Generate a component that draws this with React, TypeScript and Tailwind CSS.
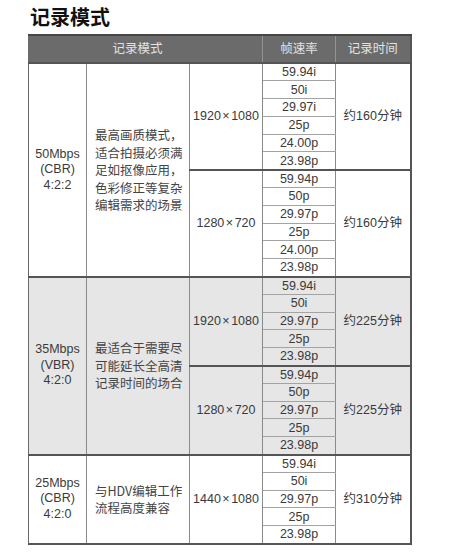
import React from "react";

type Sub = { res: [string, string]; fps: string[]; time: string };
type Section = { rate: string[]; desc: string[]; gray: boolean; subs: Sub[] };

const sections: Section[] = [
  {
    rate: ["50Mbps", "(CBR)", "4:2:2"],
    desc: ["最高画质模式，", "适合拍摄必须满", "足如抠像应用，", "色彩修正等复杂", "编辑需求的场景"],
    gray: false,
    subs: [
      { res: ["1920", "1080"], fps: ["59.94i", "50i", "29.97i", "25p", "24.00p", "23.98p"], time: "约160分钟" },
      { res: ["1280", "720"], fps: ["59.94p", "50p", "29.97p", "25p", "24.00p", "23.98p"], time: "约160分钟" },
    ],
  },
  {
    rate: ["35Mbps", "(VBR)", "4:2:0"],
    desc: ["最适合于需要尽", "可能延长全高清", "记录时间的场合"],
    gray: true,
    subs: [
      { res: ["1920", "1080"], fps: ["59.94i", "50i", "29.97p", "25p", "23.98p"], time: "约225分钟" },
      { res: ["1280", "720"], fps: ["59.94p", "50p", "29.97p", "25p", "23.98p"], time: "约225分钟" },
    ],
  },
  {
    rate: ["25Mbps", "(CBR)", "4:2:0"],
    desc: ["与HDV编辑工作", "流程高度兼容"],
    gray: false,
    subs: [{ res: ["1440", "1080"], fps: ["59.94i", "50i", "29.97p", "25p", "23.98p"], time: "约310分钟" }],
  },
];

export default function App() {
  return (
    <div className="w-[474px] h-[552px] bg-white overflow-hidden font-[family-name:'Liberation_Sans','Noto_Sans_CJK_SC',sans-serif] text-[#3a3a3a]">
      <h1 className="ml-[30px] pt-[5px] text-[20px] leading-[24px] font-bold text-[#111] font-[family-name:'Noto_Sans_CJK_SC',sans-serif]">
        记录模式
      </h1>
      <table className="ml-[28px] mt-[5px] w-[382px] table-fixed border-collapse border-l-[1.5px] border-r-2 border-b-2 border-l-[#6a6a6a] border-r-[#555] border-b-[#555] text-[12.5px]">
        <colgroup>
          <col className="w-[58px]" />
          <col className="w-[103px]" />
          <col className="w-[73px]" />
          <col className="w-[73px]" />
          <col className="w-[75px]" />
        </colgroup>
        <thead>
          <tr className="h-[28px] bg-[#6b6b6b] text-[#e2e2e2]">
            <th colSpan={3} className="font-normal border-t-2 border-t-[#464646] border-b-2 border-b-[#555] pr-[16px] text-center">
              <span className="font-[family-name:'Noto_Sans_CJK_SC',sans-serif]">记录模式</span>
            </th>
            <th className="font-normal border-t-2 border-t-[#464646] border-b-2 border-b-[#555] border-l border-l-[#929292] text-center">
              <span className="font-[family-name:'Noto_Sans_CJK_SC',sans-serif]">帧速率</span>
            </th>
            <th className="font-normal border-t-2 border-t-[#464646] border-b-2 border-b-[#555] border-l border-l-[#929292] text-center">
              <span className="font-[family-name:'Noto_Sans_CJK_SC',sans-serif]">记录时间</span>
            </th>
          </tr>
        </thead>
        {sections.map((sec, si) => {
          const total = sec.subs.reduce((a, s) => a + s.fps.length, 0);
          const bg = sec.gray ? "bg-[#e6e6e6]" : "bg-white";
          return (
            <tbody key={si} className={bg}>
              {sec.subs.map((sub, bi) =>
                sub.fps.map((f, fi) => {
                  const lastInSub = fi === sub.fps.length - 1;
                  return (
                    <tr key={`${bi}-${fi}`} className="h-[17.8px]">
                      {bi === 0 && fi === 0 && (
                        <>
                          <td rowSpan={total} className="border-r border-r-[#8a8a8a] border-b-2 border-b-[#555] text-center leading-[15.5px] p-0">
                            {sec.rate.map((r) => (
                              <div key={r}>{r}</div>
                            ))}
                          </td>
                          <td rowSpan={total} className="border-r border-r-[#8a8a8a] border-b-2 border-b-[#555] pl-[8px] p-0 text-[12.5px] leading-[17.5px] text-[#444] font-[family-name:'Noto_Sans_CJK_SC',sans-serif]">
                            {sec.desc.map((d) => (
                              <div key={d} className="whitespace-nowrap">{d}</div>
                            ))}
                          </td>
                        </>
                      )}
                      {fi === 0 && (
                        <td rowSpan={sub.fps.length} className="border-r border-r-[#8a8a8a] border-b-2 border-b-[#555] text-center p-0 whitespace-nowrap">
                          {sub.res[0]}
                          <span className="mx-[1.5px]">×</span>
                          {sub.res[1]}
                        </td>
                      )}
                      <td className={`border-r border-r-[#8a8a8a] text-center p-0 leading-[16px] ${lastInSub ? "border-b-2 border-b-[#555]" : "border-b border-b-[#a3a3a3]"}`}>
                        {f}
                      </td>
                      {fi === 0 && (
                        <td rowSpan={sub.fps.length} className="border-b-2 border-b-[#555] text-center p-0 whitespace-nowrap">
                          {sub.time}
                        </td>
                      )}
                    </tr>
                  );
                })
              )}
            </tbody>
          );
        })}
      </table>
    </div>
  );
}
